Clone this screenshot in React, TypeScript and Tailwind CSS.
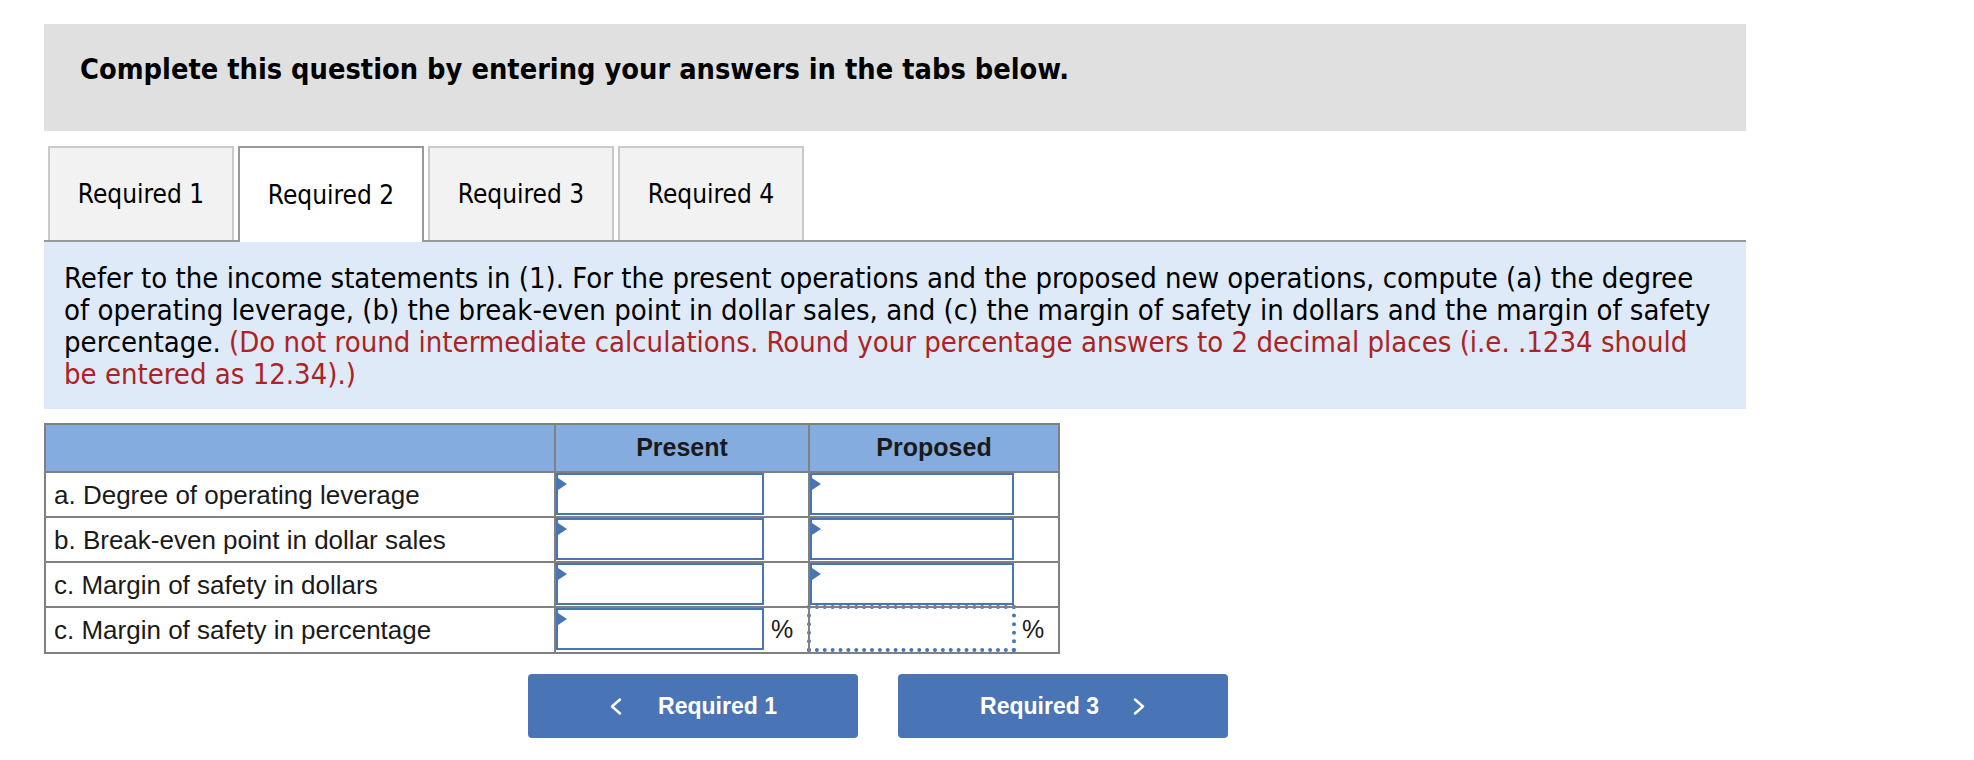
import React from "react";

const tahoma = "font-['DejaVu_Sans_Condensed','DejaVu_Sans',sans-serif]";
const arial = "font-['Liberation_Sans',Arial,sans-serif]";

const tabs = ["Required 1", "Required 2", "Required 3", "Required 4"];

const rows = [
  { label: "a. Degree of operating leverage", pct: false },
  { label: "b. Break-even point in dollar sales", pct: false },
  { label: "c. Margin of safety in dollars", pct: false },
  { label: "c. Margin of safety in percentage", pct: true },
];

const Flag = () => (
  <svg
    className="absolute left-0 top-[3px]"
    width="9"
    height="12"
    viewBox="0 0 9 12"
  >
    <polygon points="0,0 9,6 0,12" fill="#4a75b5" />
  </svg>
);

const AnswerBox = ({ dotted = false }: { dotted?: boolean }) =>
  dotted ? (
    <div className="-ml-[3px] -mt-[3px] h-[47px] w-[209px] border-[4px] border-dotted border-[#4a75b5] bg-white" />
  ) : (
    <div className="relative h-[42px] w-full border-2 border-[#4a75b5] bg-white">
      <Flag />
    </div>
  );

const Chevron = ({ dir }: { dir: "left" | "right" }) => (
  <svg width="13" height="17" viewBox="0 0 13 17" fill="none">
    <polyline
      points={dir === "left" ? "11,1.5 3,8.5 11,15.5" : "2,1.5 10,8.5 2,15.5"}
      stroke="white"
      strokeWidth="2.4"
      strokeLinecap="round"
      strokeLinejoin="round"
    />
  </svg>
);

export default function App() {
  return (
    <div className="min-h-screen bg-white pl-[44px] pt-[24px] text-black">
      <div className="w-[1702px]">
        {/* question banner */}
        <div className="h-[107px] bg-[#e0e0e0] pl-[36px] pt-[28px]">
          <h2 className={`${tahoma} text-[28.7px] font-bold leading-[34px]`}>
            Complete this question by entering your answers in the tabs below.
          </h2>
        </div>

        {/* tabs */}
        <div className="mt-[15px] flex h-[96px] items-end gap-[4px] border-b-2 border-[#999999] pl-[4px]">
          {tabs.map((t, i) =>
            i === 1 ? (
              <div
                key={t}
                className={`${tahoma} -mb-[2px] flex h-[96px] w-[186px] items-center justify-center border-2 border-b-0 border-[#999999] bg-white text-[26px]`}
              >
                {t}
              </div>
            ) : (
              <div
                key={t}
                className={`${tahoma} flex h-[94px] w-[186px] items-center justify-center border-2 border-b-0 border-[#cacaca] bg-[#f2f2f2] text-[26px]`}
              >
                {t}
              </div>
            ),
          )}
        </div>

        {/* instructions */}
        <div
          className={`${tahoma} h-[167px] bg-[#deeaf8] px-[20px] pt-[20px] text-[29px] leading-[32px]`}
        >
          Refer to the income statements in (1). For the present operations and
          the proposed new operations, compute (a) the degree
          <br />
          of operating leverage, (b) the break-even point in dollar sales, and
          (c) the margin of safety in dollars and the margin of safety
          <br />
          percentage.{" "}
          <span className="text-[#ad2222]">
            (Do not round intermediate calculations. Round your percentage
            answers to 2 decimal places (i.e. .1234 should
            <br />
            be entered as 12.34).)
          </span>
        </div>
      </div>

      {/* answer table */}
      <table
        className={`${arial} mt-[14px] w-[1014px] table-fixed border-collapse border-2 border-[#808080] text-[#1a1a1a]`}
      >
        <colgroup>
          <col className="w-[510px]" />
          <col className="w-[209px]" />
          <col className="w-[45px]" />
          <col className="w-[205px]" />
          <col className="w-[45px]" />
        </colgroup>
        <thead>
          <tr className="h-[48px] bg-[#84acdf] text-[25px] font-bold">
            <th className="border-2 border-[#808080]" />
            <th colSpan={2} className="border-2 border-[#808080]">
              Present
            </th>
            <th colSpan={2} className="border-2 border-[#808080]">
              Proposed
            </th>
          </tr>
        </thead>
        <tbody>
          {rows.map((r) => (
            <tr key={r.label} className="h-[45px] text-[26px]">
              <td className="border-2 border-[#808080] px-[8px] leading-[30px]">
                {r.label}
              </td>
              <td className="border-y-2 border-l-2 border-[#808080] p-0 align-top">
                <AnswerBox />
              </td>
              <td className="border-y-2 border-r-2 border-[#808080] pl-[7px] text-[25px]">
                {r.pct ? "%" : ""}
              </td>
              <td className="border-y-2 border-l-2 border-[#808080] p-0 align-top">
                <AnswerBox dotted={r.pct} />
              </td>
              <td className="border-y-2 border-r-2 border-[#808080] pl-[8px] text-[25px]">
                {r.pct ? "%" : ""}
              </td>
            </tr>
          ))}
        </tbody>
      </table>

      {/* navigation */}
      <div className="ml-[484px] mt-[20px] flex gap-[40px] pb-[20px]">
        <button
          className={`${arial} flex h-[64px] w-[330px] items-center justify-center gap-[36px] rounded-[4px] bg-[#4975b6] text-[23px] font-bold text-white`}
        >
          <Chevron dir="left" />
          Required 1
        </button>
        <button
          className={`${arial} flex h-[64px] w-[330px] items-center justify-center gap-[34px] rounded-[4px] bg-[#4975b6] text-[23px] font-bold text-white`}
        >
          Required 3
          <Chevron dir="right" />
        </button>
      </div>
    </div>
  );
}
